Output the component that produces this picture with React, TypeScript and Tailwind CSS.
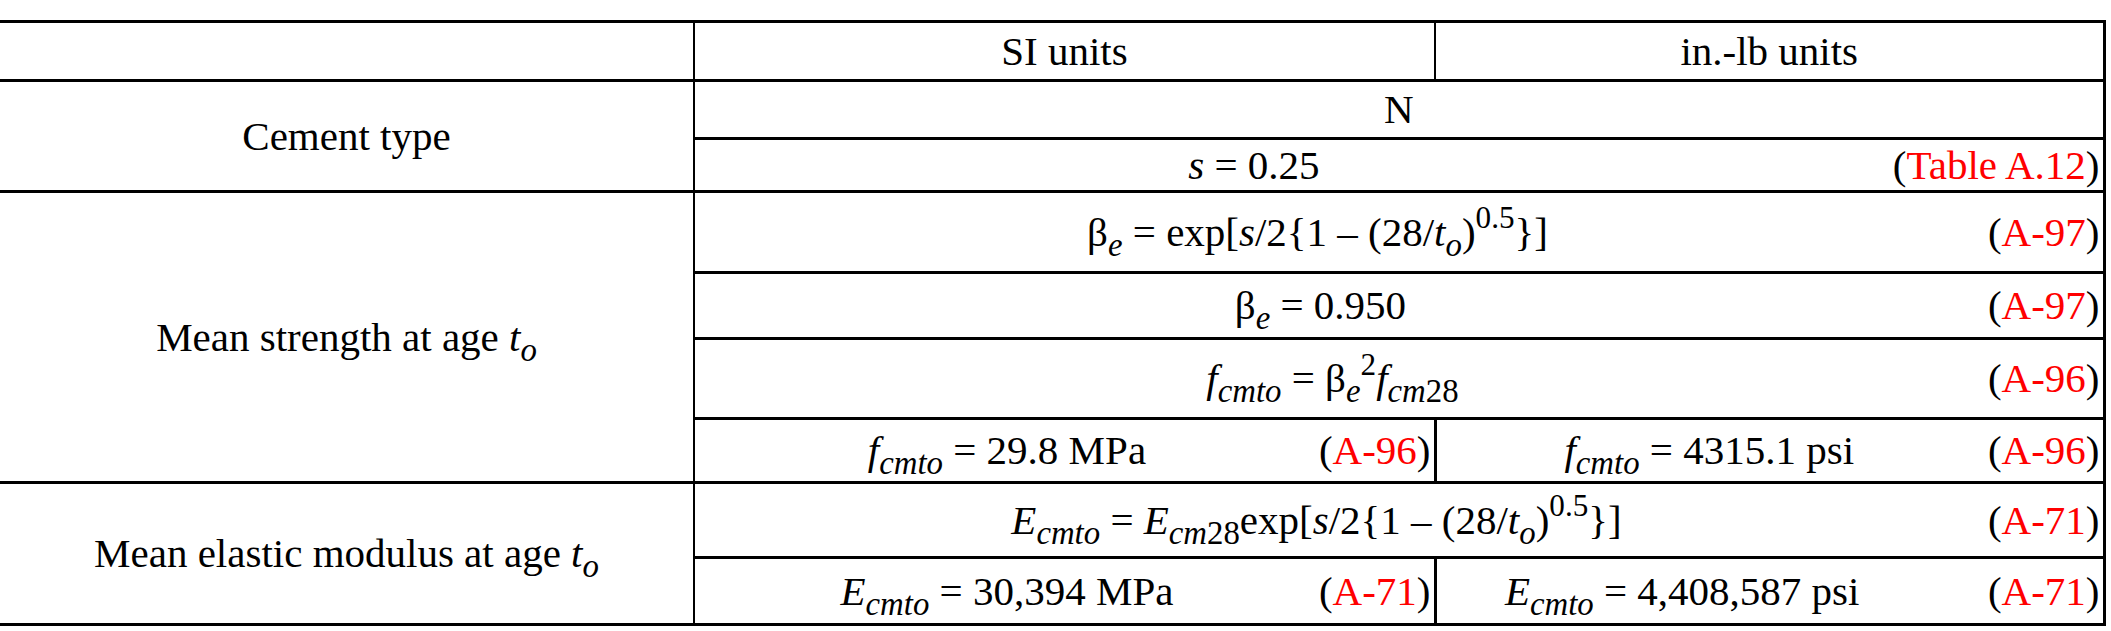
import React from 'react';

const Tag = ({ children }: { children: React.ReactNode }) => (
  <span className="whitespace-nowrap text-black">
    (<span className="text-[#ff0000]">{children}</span>)
  </span>
);

const Sub = ({ children }: { children: React.ReactNode }) => (
  <sub className="italic text-[80%] -bottom-[0.32em]">{children}</sub>
);

const Sup = ({ children }: { children: React.ReactNode }) => (
  <sup className="text-[76%] -top-[0.55em]">{children}</sup>
);

// formula centred in what is left beside the equation number; shift nudges the centre left
const Eq = ({ tag, shift = 'pr-[48px]', children }: { tag: string; shift?: string; children: React.ReactNode }) => (
  <div className="flex items-baseline">
    <div className={`flex-1 text-center whitespace-nowrap ${shift}`}>{children}</div>
    <Tag>{tag}</Tag>
  </div>
);

const Exp = () => (
  <>
    exp[<i>s</i>/2{'{'}1 – (28/<i>t</i>
    <Sub>o</Sub>)<Sup>0.5</Sup>{'}'}]
  </>
);

const Fcmto = () => (
  <>
    <i>f</i>
    <Sub>cmto</Sub>
  </>
);

const Ecmto = () => (
  <>
    <i>E</i>
    <Sub>cmto</Sub>
  </>
);

const Cm28 = () => (
  <sub className="text-[80%] -bottom-[0.32em]">
    <i>cm</i>28
  </sub>
);

export default function App() {
  const label = 'border-r-2 border-black text-center align-middle';
  const cell = 'pr-[3px] align-middle border-r-[3px] border-black';

  return (
    <div className="bg-white w-[2111px] h-[631px] overflow-hidden font-['Liberation_Serif','Times_New_Roman',serif] text-[41px] leading-none text-black">
      <div className="h-[20px] overflow-hidden">
        <div className="-mt-[43px] pl-[60px] h-[41px] whitespace-nowrap">
          Step 3, compute properties at age <i>t</i>
          <sub className="italic">o</sub>, given <i>f</i>
          <sub>cm28</sub> and <i>E</i>
          <sub>cm28</sub> (typical, p. 12)
        </div>
      </div>

      <table className="w-[2104px] table-fixed border-collapse">
        <colgroup>
          <col className="w-[694px]" />
          <col className="w-[741px]" />
          <col className="w-[669px]" />
        </colgroup>
        <tbody>
          <tr className="h-[59px] border-t-[3px] border-b-[3px] border-black">
            <td className={label}></td>
            <td className="border-r-2 border-black text-center align-middle">SI units</td>
            <td className="border-r-[3px] border-black text-center align-middle">in.-lb units</td>
          </tr>

          <tr className="h-[58px] border-b-[3px] border-black">
            <td rowSpan={2} className={label}>
              Cement type
            </td>
            <td colSpan={2} className="border-r-[3px] border-black text-center align-middle">
              N
            </td>
          </tr>
          <tr className="h-[53px] border-b-[3px] border-black">
            <td colSpan={2} className={cell}>
              <Eq tag="Table A.12" shift="pr-[80px]">
                <i>s</i> = 0.25
              </Eq>
            </td>
          </tr>

          <tr className="h-[81px] border-b-[3px] border-black">
            <td rowSpan={4} className={label}>
              Mean strength at age <i>t</i>
              <Sub>o</Sub>
            </td>
            <td colSpan={2} className={cell}>
              <Eq tag="A-97">
                β<Sub>e</Sub> = <Exp />
              </Eq>
            </td>
          </tr>
          <tr className="h-[66px] border-b-[3px] border-black">
            <td colSpan={2} className={cell}>
              <Eq tag="A-97" shift="pr-[42px]">
                β<Sub>e</Sub> = 0.950
              </Eq>
            </td>
          </tr>
          <tr className="h-[80px] border-b-[3px] border-black">
            <td colSpan={2} className={cell}>
              <Eq tag="A-96" shift="pr-[18px]">
                <Fcmto /> = β<Sub>e</Sub>
                <Sup>2</Sup>
                <i>f</i>
                <Cm28 />
              </Eq>
            </td>
          </tr>
          <tr className="h-[64px] border-b-[3px] border-black">
            <td className={`${cell} border-r-2`}>
              <Eq tag="A-96" shift="pr-0">
                <Fcmto /> = 29.8 MPa
              </Eq>
            </td>
            <td className={cell}>
              <Eq tag="A-96" shift="pr-[6px]">
                <Fcmto /> = 4315.1 psi
              </Eq>
            </td>
          </tr>

          <tr className="h-[75px] border-b-[3px] border-black">
            <td rowSpan={2} className={label}>
              Mean elastic modulus at age <i>t</i>
              <Sub>o</Sub>
            </td>
            <td colSpan={2} className={cell}>
              <Eq tag="A-71" shift="pr-[50px]">
                <Ecmto /> = <i>E</i>
                <Cm28 />
                <Exp />
              </Eq>
            </td>
          </tr>
          <tr className="h-[67px] border-b-[3px] border-black">
            <td className={`${cell} border-r-2`}>
              <Eq tag="A-71" shift="pr-0">
                <Ecmto /> = 30,394 MPa
              </Eq>
            </td>
            <td className={cell}>
              <Eq tag="A-71" shift="pr-[60px]">
                <Ecmto /> = 4,408,587 psi
              </Eq>
            </td>
          </tr>
        </tbody>
      </table>
    </div>
  );
}
